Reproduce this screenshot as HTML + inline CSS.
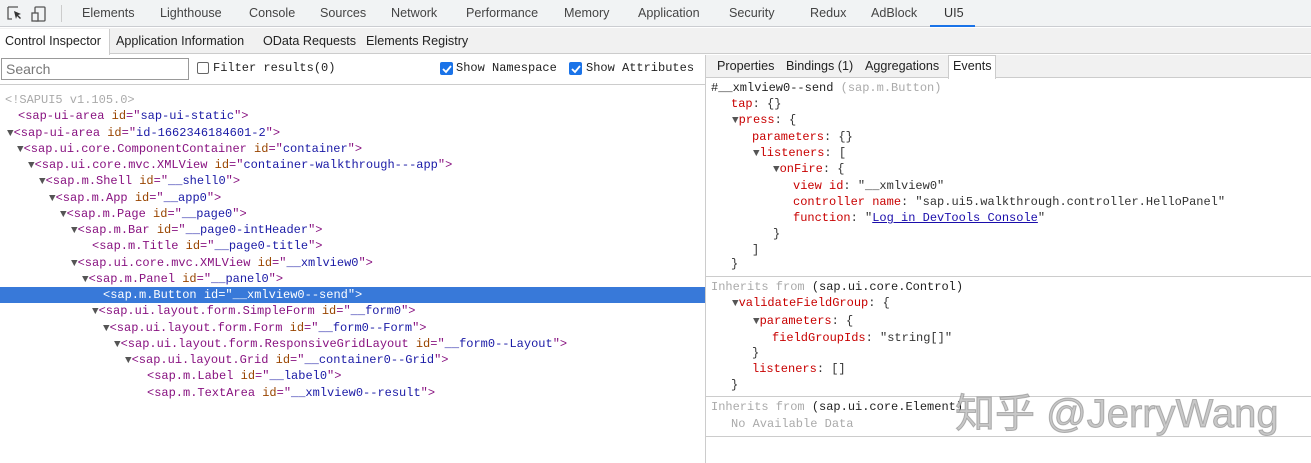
<!DOCTYPE html>
<html><head><meta charset="utf-8"><style>
*{margin:0;padding:0;box-sizing:border-box}
body{width:1311px;height:463px;overflow:hidden;background:#fff;font-family:"Liberation Sans",sans-serif;position:relative;color:#333}
.a{position:absolute;white-space:pre}
.m{font-family:"Liberation Mono",monospace;font-size:12px}
.t{color:#881280}.n{color:#994500}.v{color:#1a1aa6}.k{color:#c80000}.g{color:#aaa}.b{color:#222}
.tri{font-size:11px;color:#555}
.tree{white-space:nowrap}
.tree div{height:16.25px;line-height:16.25px;white-space:pre}
.tb{top:6px;font-size:12.6px;color:#444}
</style></head><body>
<div class="a" style="left:0;top:0;width:1311px;height:27px;background:#f1f3f4;border-bottom:1px solid #cbcdd1"></div>
<svg class="a" style="left:5px;top:4px" width="44" height="20" viewBox="0 0 44 20"><path d="M3 3h10M3 3v12h4" fill="none" stroke="#555" stroke-width="1.3"/><path d="M9 7l7 3-3 1 3 3-1 1-3-3-1 3z" fill="#333"/><rect x="30" y="3" width="10" height="14" rx="1" fill="none" stroke="#555" stroke-width="1.3"/><rect x="27" y="9" width="6" height="8" fill="#f1f3f4" stroke="#555" stroke-width="1.3"/></svg>
<div class="a" style="left:61px;top:5px;width:1px;height:17px;background:#ccc"></div>
<div class="a tb" style="left:82px">Elements</div>
<div class="a tb" style="left:160px">Lighthouse</div>
<div class="a tb" style="left:249px">Console</div>
<div class="a tb" style="left:320px">Sources</div>
<div class="a tb" style="left:391px">Network</div>
<div class="a tb" style="left:466px">Performance</div>
<div class="a tb" style="left:564px">Memory</div>
<div class="a tb" style="left:638px">Application</div>
<div class="a tb" style="left:729px">Security</div>
<div class="a tb" style="left:810px">Redux</div>
<div class="a tb" style="left:871px">AdBlock</div>
<div class="a tb" style="left:944px;color:#333">UI5</div>
<div class="a" style="left:930px;top:25px;width:45px;height:2px;background:#1a73e8"></div>
<div class="a" style="left:0;top:28px;width:1311px;height:26px;background:#f1f1f1;border-bottom:1px solid #ccc"></div>
<div class="a" style="left:0;top:29px;width:110px;height:26px;background:#fff;border-right:1px solid #ccc"></div>
<div class="a" style="top:34px;font-size:12.6px;color:#222;left:5px">Control Inspector</div>
<div class="a" style="top:34px;font-size:12.6px;color:#222;left:116px">Application Information</div>
<div class="a" style="top:34px;font-size:12.6px;color:#222;left:263px">OData Requests</div>
<div class="a" style="top:34px;font-size:12.6px;color:#222;left:366px">Elements Registry</div>
<div class="a" style="left:1px;top:58px;width:188px;height:22px;border:1px solid #999;background:#fff"></div>
<div class="a" style="left:6px;top:61px;font-size:14px;color:#777">Search</div>
<div class="a" style="left:197px;top:62px;width:12px;height:12px;border:1px solid #666;border-radius:2px;background:#fff"></div>
<div class="a m" style="left:213px;top:61px;color:#222">Filter results(0)</div>
<div class="a" style="left:440px;top:62px;width:13px;height:13px;border-radius:2px;background:#1a73e8"></div>
<svg class="a" style="left:440px;top:62px" width="13" height="13"><path d="M3 7l3 3 5-6" fill="none" stroke="#fff" stroke-width="1.8"/></svg>
<div class="a m" style="left:456px;top:61px;color:#222">Show Namespace</div>
<div class="a" style="left:569px;top:62px;width:13px;height:13px;border-radius:2px;background:#1a73e8"></div>
<svg class="a" style="left:569px;top:62px" width="13" height="13"><path d="M3 7l3 3 5-6" fill="none" stroke="#fff" stroke-width="1.8"/></svg>
<div class="a m" style="left:586px;top:61px;color:#222">Show Attributes</div>
<div class="a" style="left:0;top:84px;width:705px;height:1px;background:#ccc"></div>
<div class="a" style="left:705px;top:55px;width:1px;height:408px;background:#ccc"></div>
<div class="a" style="left:0;top:287px;width:705px;height:16px;background:#3879d9"></div>
<div class="a m tree" style="left:5px;top:92px"><div class="g">&lt;!SAPUI5 v1.105.0&gt;</div><div style="padding-left:13px"><span class="t">&lt;sap-ui-area </span><span class="n">id</span><span class="t">="</span><span class="v">sap-ui-static</span><span class="t">"&gt;</span></div><div style="padding-left:2px"><span class="tri">▼</span><span class="t">&lt;sap-ui-area </span><span class="n">id</span><span class="t">="</span><span class="v">id-1662346184601-2</span><span class="t">"&gt;</span></div><div style="padding-left:12px"><span class="tri">▼</span><span class="t">&lt;sap.ui.core.ComponentContainer </span><span class="n">id</span><span class="t">="</span><span class="v">container</span><span class="t">"&gt;</span></div><div style="padding-left:23px"><span class="tri">▼</span><span class="t">&lt;sap.ui.core.mvc.XMLView </span><span class="n">id</span><span class="t">="</span><span class="v">container-walkthrough---app</span><span class="t">"&gt;</span></div><div style="padding-left:34px"><span class="tri">▼</span><span class="t">&lt;sap.m.Shell </span><span class="n">id</span><span class="t">="</span><span class="v">__shell0</span><span class="t">"&gt;</span></div><div style="padding-left:44px"><span class="tri">▼</span><span class="t">&lt;sap.m.App </span><span class="n">id</span><span class="t">="</span><span class="v">__app0</span><span class="t">"&gt;</span></div><div style="padding-left:55px"><span class="tri">▼</span><span class="t">&lt;sap.m.Page </span><span class="n">id</span><span class="t">="</span><span class="v">__page0</span><span class="t">"&gt;</span></div><div style="padding-left:66px"><span class="tri">▼</span><span class="t">&lt;sap.m.Bar </span><span class="n">id</span><span class="t">="</span><span class="v">__page0-intHeader</span><span class="t">"&gt;</span></div><div style="padding-left:87px"><span class="t">&lt;sap.m.Title </span><span class="n">id</span><span class="t">="</span><span class="v">__page0-title</span><span class="t">"&gt;</span></div><div style="padding-left:66px"><span class="tri">▼</span><span class="t">&lt;sap.ui.core.mvc.XMLView </span><span class="n">id</span><span class="t">="</span><span class="v">__xmlview0</span><span class="t">"&gt;</span></div><div style="padding-left:77px"><span class="tri">▼</span><span class="t">&lt;sap.m.Panel </span><span class="n">id</span><span class="t">="</span><span class="v">__panel0</span><span class="t">"&gt;</span></div><div style="padding-left:98px;color:#fff">&lt;sap.m.Button id="__xmlview0--send"&gt;</div><div style="padding-left:87px"><span class="tri">▼</span><span class="t">&lt;sap.ui.layout.form.SimpleForm </span><span class="n">id</span><span class="t">="</span><span class="v">__form0</span><span class="t">"&gt;</span></div><div style="padding-left:98px"><span class="tri">▼</span><span class="t">&lt;sap.ui.layout.form.Form </span><span class="n">id</span><span class="t">="</span><span class="v">__form0--Form</span><span class="t">"&gt;</span></div><div style="padding-left:109px"><span class="tri">▼</span><span class="t">&lt;sap.ui.layout.form.ResponsiveGridLayout </span><span class="n">id</span><span class="t">="</span><span class="v">__form0--Layout</span><span class="t">"&gt;</span></div><div style="padding-left:120px"><span class="tri">▼</span><span class="t">&lt;sap.ui.layout.Grid </span><span class="n">id</span><span class="t">="</span><span class="v">__container0--Grid</span><span class="t">"&gt;</span></div><div style="padding-left:142px"><span class="t">&lt;sap.m.Label </span><span class="n">id</span><span class="t">="</span><span class="v">__label0</span><span class="t">"&gt;</span></div><div style="padding-left:142px"><span class="t">&lt;sap.m.TextArea </span><span class="n">id</span><span class="t">="</span><span class="v">__xmlview0--result</span><span class="t">"&gt;</span></div></div>
<div class="a" style="left:706px;top:55px;width:605px;height:23px;background:#f1f1f1;border-bottom:1px solid #ccc"></div>
<div class="a" style="left:948px;top:55px;width:48px;height:24px;background:#fff;border:1px solid #ccc;border-bottom:none"></div>
<div class="a" style="top:59px;font-size:12.6px;color:#222;left:717px">Properties</div>
<div class="a" style="top:59px;font-size:12.6px;color:#222;left:786px">Bindings (1)</div>
<div class="a" style="top:59px;font-size:12.6px;color:#222;left:865px">Aggregations</div>
<div class="a" style="top:59px;font-size:12.6px;color:#222;left:953px">Events</div>
<div class="a m b" style="left:711px;top:81px">#__xmlview0--send <span class="g">(sap.m.Button)</span></div>
<div class="a m" style="left:731px;top:97px"><span class="k">tap</span>: {}</div>
<div class="a m" style="left:732px;top:113px"><span class="tri">▼</span><span class="k">press</span>: {</div>
<div class="a m" style="left:752px;top:130px"><span class="k">parameters</span>: {}</div>
<div class="a m" style="left:753px;top:146px"><span class="tri">▼</span><span class="k">listeners</span>: [</div>
<div class="a m" style="left:773px;top:162px"><span class="tri">▼</span><span class="k">onFire</span>: {</div>
<div class="a m" style="left:793px;top:179px"><span class="k">view id</span>: "__xmlview0"</div>
<div class="a m" style="left:793px;top:195px"><span class="k">controller name</span>: "sap.ui5.walkthrough.controller.HelloPanel"</div>
<div class="a m" style="left:793px;top:211px"><span class="k">function</span>: "<span style="color:#1a0dab;text-decoration:underline">Log in DevTools Console</span>"</div>
<div class="a m" style="left:773px;top:227px">}</div>
<div class="a m" style="left:752px;top:243px">]</div>
<div class="a m" style="left:731px;top:257px">}</div>
<div class="a" style="left:706px;top:276px;width:605px;height:1px;background:#ccc"></div>
<div class="a m b" style="left:711px;top:280px"><span class="g">Inherits from</span> (sap.ui.core.Control)</div>
<div class="a m" style="left:732px;top:296px"><span class="tri">▼</span><span class="k">validateFieldGroup</span>: {</div>
<div class="a m" style="left:753px;top:314px"><span class="tri">▼</span><span class="k">parameters</span>: {</div>
<div class="a m" style="left:772px;top:331px"><span class="k">fieldGroupIds</span>: "string[]"</div>
<div class="a m" style="left:752px;top:346px">}</div>
<div class="a m" style="left:752px;top:362px"><span class="k">listeners</span>: []</div>
<div class="a m" style="left:731px;top:378px">}</div>
<div class="a" style="left:706px;top:396px;width:605px;height:1px;background:#ccc"></div>
<div class="a m b" style="left:711px;top:400px"><span class="g">Inherits from</span> (sap.ui.core.Element)</div>
<div class="a m g" style="left:731px;top:417px">No Available Data</div>
<div class="a" style="left:706px;top:436px;width:605px;height:1px;background:#ccc"></div>
<div class="a" style="left:955px;top:381px;font-size:40px;color:rgba(190,190,190,0.85);font-family:'Liberation Sans','Noto Sans CJK SC',sans-serif;-webkit-text-stroke:1px rgba(120,120,120,0.5)">知乎 @JerryWang</div>
</body></html>
